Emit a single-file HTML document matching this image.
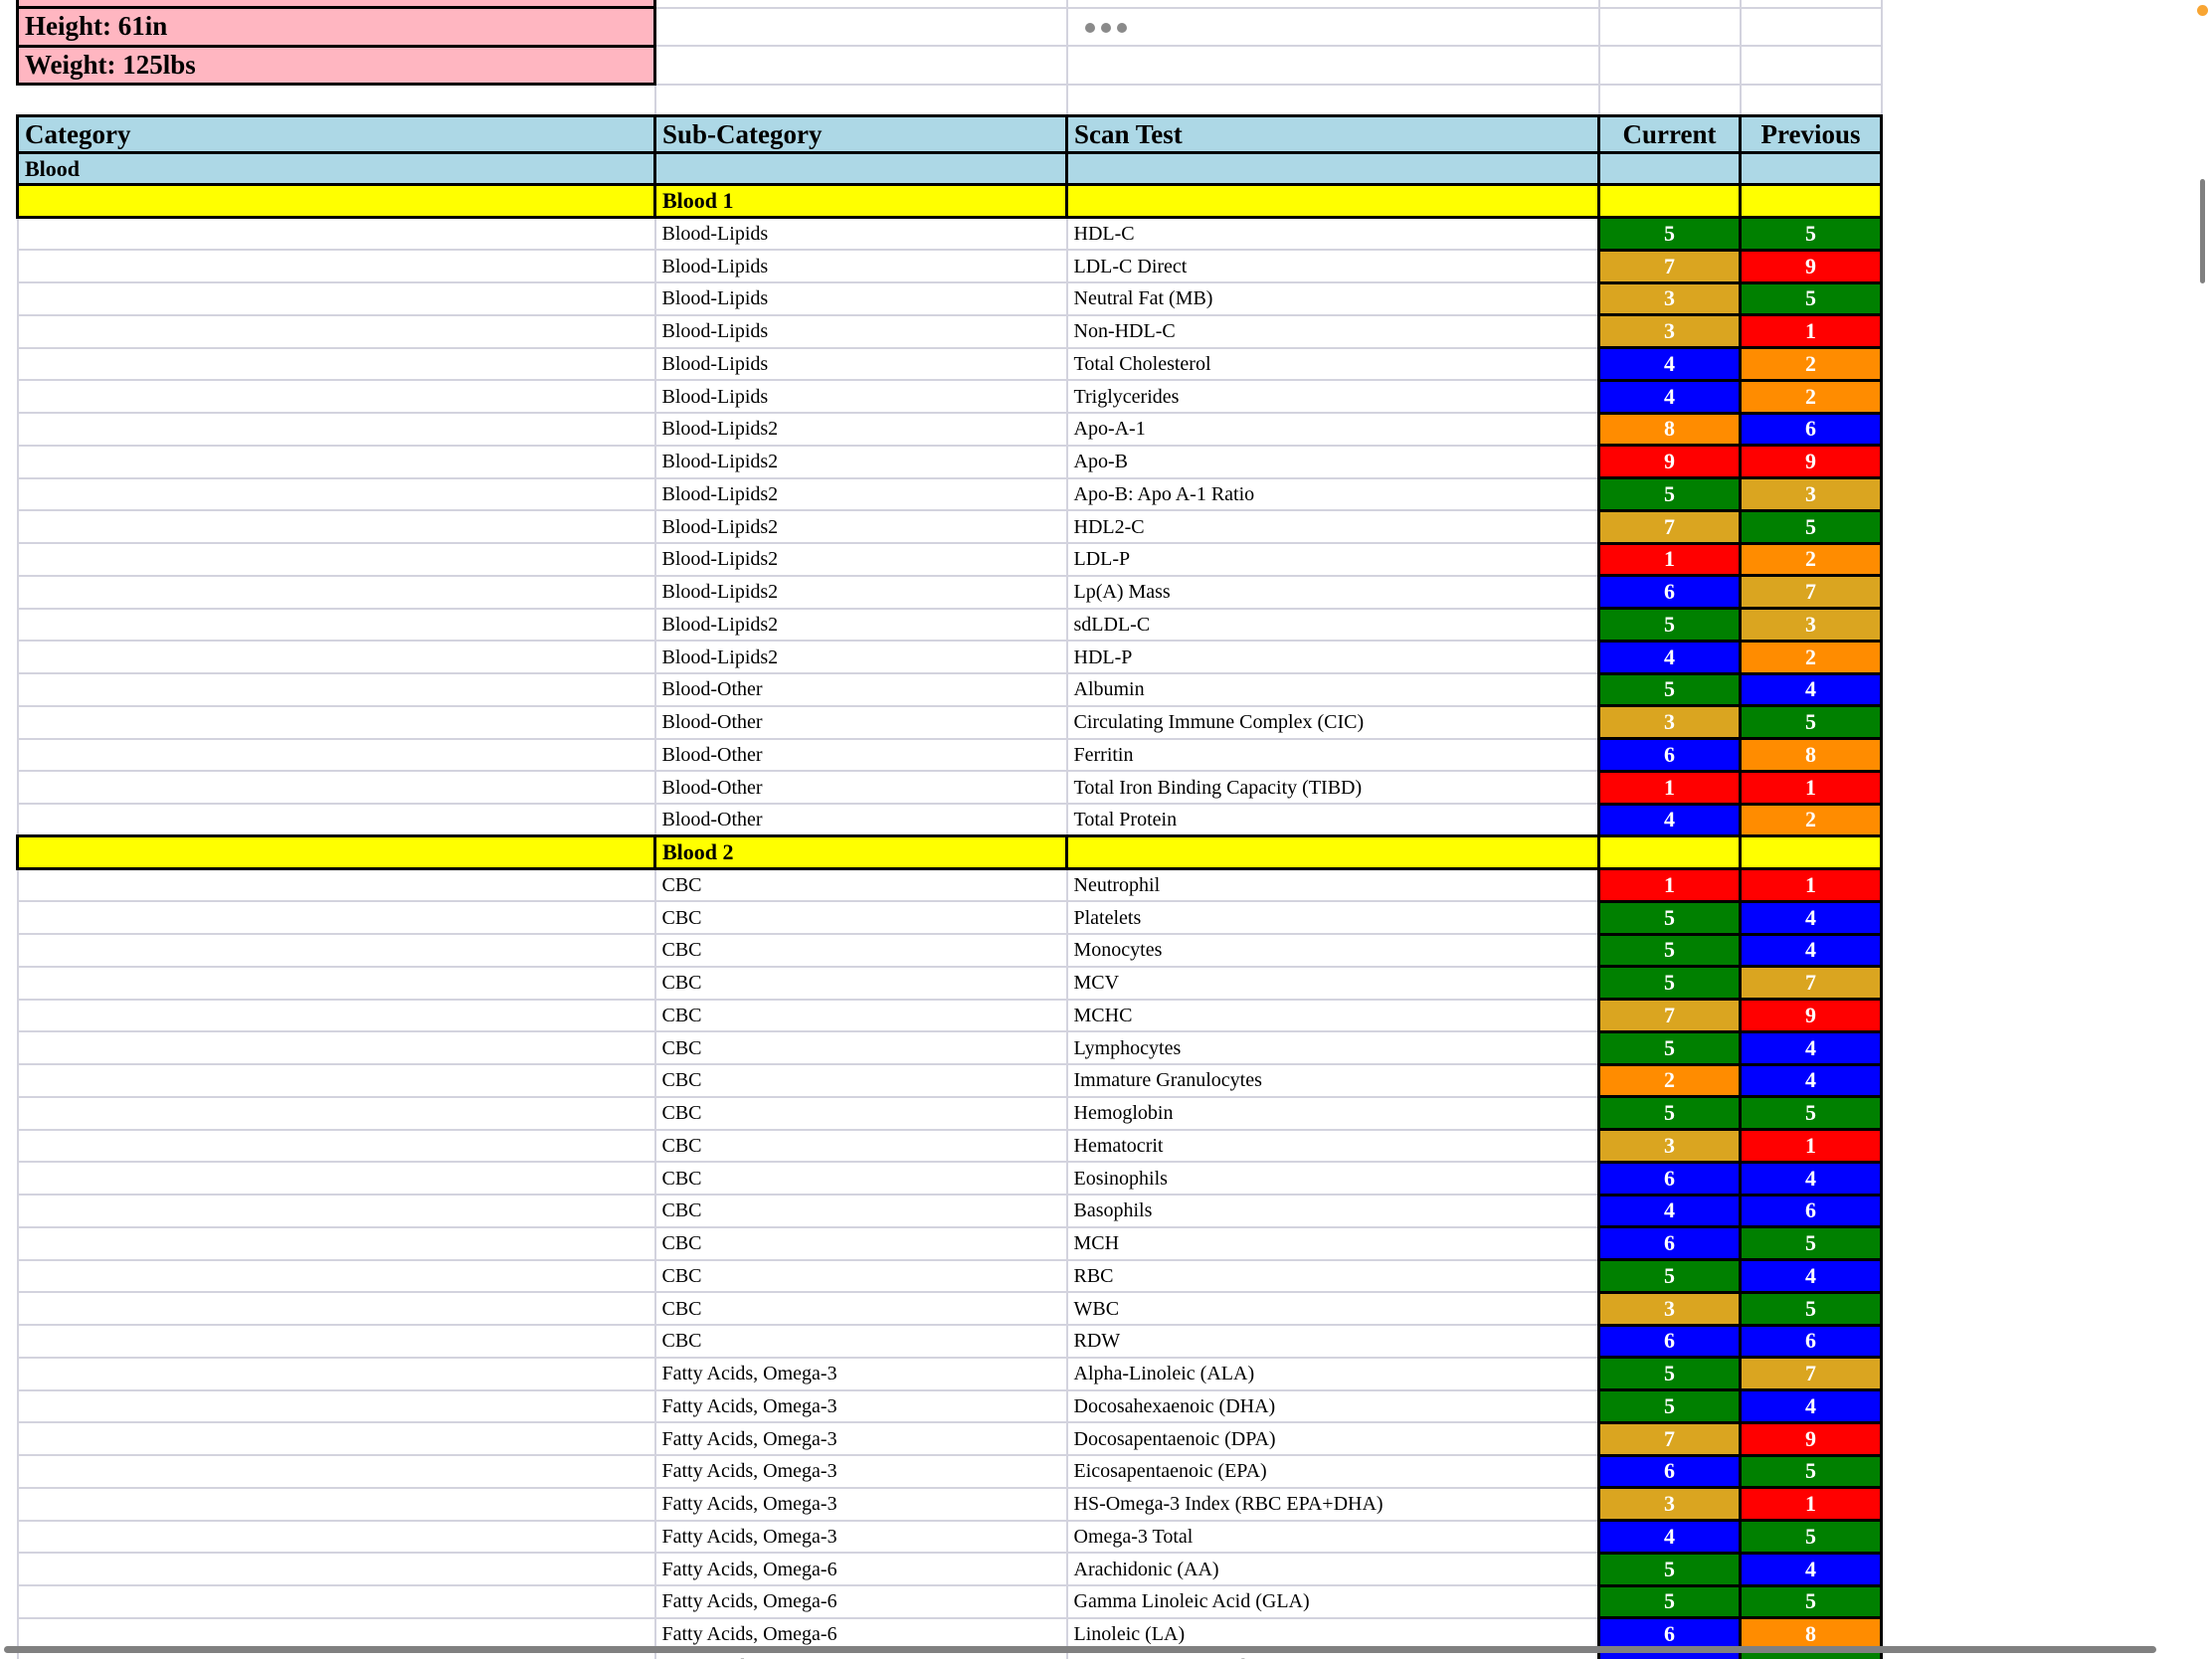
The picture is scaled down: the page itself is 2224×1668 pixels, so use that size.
<!DOCTYPE html>
<html><head><meta charset="utf-8">
<style>
html,body{margin:0;padding:0;width:2224px;height:1668px;overflow:hidden;background:#fff;}
body{position:relative;font-family:"Liberation Serif",serif;color:#000;}
table{position:absolute;left:16px;top:-28px;border-collapse:collapse;table-layout:fixed;width:1876px;}
td{border:2.5px solid #d3d3de;padding:0 0 0 6px;font-size:20px;white-space:nowrap;overflow:hidden;line-height:1;}
tr{height:32.75px;}
.pk{background:#ffb6c1;border:3px solid #000;font-weight:bold;font-size:27px;}
.lb{background:#add8e6;border:3px solid #000;}
.hd td.lb{font-weight:bold;font-size:27px;}
.ye{background:#ffff00;border:3px solid #000;font-weight:bold;font-size:22px;}
.c{text-align:center;padding:0;}
.n{color:#fff;font-weight:bold;font-size:22px;text-align:center;padding:0;border:3px solid #000;}
.r{background:#ff0000}.o{background:#ff8c00}.g{background:#daa520}.b{background:#0000ff}.gr{background:#008000}
.dots{position:absolute;top:20px;left:1091px;}
.dots i{display:inline-block;width:10px;height:10px;border-radius:50%;background:#8a8a8a;margin-right:6px;}
.hs{position:absolute;left:4px;top:1655px;width:2164px;height:7px;border-radius:4px;background:#808080;}
.vs{position:absolute;left:2212px;top:180px;width:5px;height:105px;border-radius:3px;background:#808080;}
.dot{position:absolute;left:2209px;top:5px;width:11px;height:11px;border-radius:50%;background:#f8a533;}
</style></head><body>
<table>
<colgroup><col style="width:641px"><col style="width:414px"><col style="width:535px"><col style="width:142px"><col style="width:142px"></colgroup>
<tr style="height:34px"><td class="pk"></td><td></td><td></td><td></td><td></td></tr>
<tr style="height:38.5px"><td class="pk">Height: 61in</td><td></td><td></td><td></td><td></td></tr>
<tr style="height:38.5px"><td class="pk">Weight: 125lbs</td><td></td><td></td><td></td><td></td></tr>
<tr style="height:32px"><td style="border-left-color:#fff"></td><td></td><td></td><td></td><td></td></tr>
<tr class="hd" style="height:37px"><td class="lb">Category</td><td class="lb">Sub-Category</td><td class="lb">Scan Test</td><td class="lb c">Current</td><td class="lb c">Previous</td></tr>
<tr style="height:32px"><td class="lb" style="font-weight:bold;font-size:22px">Blood</td><td class="lb"></td><td class="lb"></td><td class="lb"></td><td class="lb"></td></tr>
<tr style="height:33px"><td class="ye"></td><td class="ye">Blood 1</td><td class="ye"></td><td class="ye"></td><td class="ye"></td></tr>
<tr><td></td><td>Blood-Lipids</td><td>HDL-C</td><td class="n gr">5</td><td class="n gr">5</td></tr>
<tr><td></td><td>Blood-Lipids</td><td>LDL-C Direct</td><td class="n g">7</td><td class="n r">9</td></tr>
<tr><td></td><td>Blood-Lipids</td><td>Neutral Fat (MB)</td><td class="n g">3</td><td class="n gr">5</td></tr>
<tr><td></td><td>Blood-Lipids</td><td>Non-HDL-C</td><td class="n g">3</td><td class="n r">1</td></tr>
<tr><td></td><td>Blood-Lipids</td><td>Total Cholesterol</td><td class="n b">4</td><td class="n o">2</td></tr>
<tr><td></td><td>Blood-Lipids</td><td>Triglycerides</td><td class="n b">4</td><td class="n o">2</td></tr>
<tr><td></td><td>Blood-Lipids2</td><td>Apo-A-1</td><td class="n o">8</td><td class="n b">6</td></tr>
<tr><td></td><td>Blood-Lipids2</td><td>Apo-B</td><td class="n r">9</td><td class="n r">9</td></tr>
<tr><td></td><td>Blood-Lipids2</td><td>Apo-B: Apo A-1 Ratio</td><td class="n gr">5</td><td class="n g">3</td></tr>
<tr><td></td><td>Blood-Lipids2</td><td>HDL2-C</td><td class="n g">7</td><td class="n gr">5</td></tr>
<tr><td></td><td>Blood-Lipids2</td><td>LDL-P</td><td class="n r">1</td><td class="n o">2</td></tr>
<tr><td></td><td>Blood-Lipids2</td><td>Lp(A) Mass</td><td class="n b">6</td><td class="n g">7</td></tr>
<tr><td></td><td>Blood-Lipids2</td><td>sdLDL-C</td><td class="n gr">5</td><td class="n g">3</td></tr>
<tr><td></td><td>Blood-Lipids2</td><td>HDL-P</td><td class="n b">4</td><td class="n o">2</td></tr>
<tr><td></td><td>Blood-Other</td><td>Albumin</td><td class="n gr">5</td><td class="n b">4</td></tr>
<tr><td></td><td>Blood-Other</td><td>Circulating Immune Complex (CIC)</td><td class="n g">3</td><td class="n gr">5</td></tr>
<tr><td></td><td>Blood-Other</td><td>Ferritin</td><td class="n b">6</td><td class="n o">8</td></tr>
<tr><td></td><td>Blood-Other</td><td>Total Iron Binding Capacity (TIBD)</td><td class="n r">1</td><td class="n r">1</td></tr>
<tr><td></td><td>Blood-Other</td><td>Total Protein</td><td class="n b">4</td><td class="n o">2</td></tr>
<tr><td class="ye"></td><td class="ye">Blood 2</td><td class="ye"></td><td class="ye"></td><td class="ye"></td></tr>
<tr><td></td><td>CBC</td><td>Neutrophil</td><td class="n r">1</td><td class="n r">1</td></tr>
<tr><td></td><td>CBC</td><td>Platelets</td><td class="n gr">5</td><td class="n b">4</td></tr>
<tr><td></td><td>CBC</td><td>Monocytes</td><td class="n gr">5</td><td class="n b">4</td></tr>
<tr><td></td><td>CBC</td><td>MCV</td><td class="n gr">5</td><td class="n g">7</td></tr>
<tr><td></td><td>CBC</td><td>MCHC</td><td class="n g">7</td><td class="n r">9</td></tr>
<tr><td></td><td>CBC</td><td>Lymphocytes</td><td class="n gr">5</td><td class="n b">4</td></tr>
<tr><td></td><td>CBC</td><td>Immature Granulocytes</td><td class="n o">2</td><td class="n b">4</td></tr>
<tr><td></td><td>CBC</td><td>Hemoglobin</td><td class="n gr">5</td><td class="n gr">5</td></tr>
<tr><td></td><td>CBC</td><td>Hematocrit</td><td class="n g">3</td><td class="n r">1</td></tr>
<tr><td></td><td>CBC</td><td>Eosinophils</td><td class="n b">6</td><td class="n b">4</td></tr>
<tr><td></td><td>CBC</td><td>Basophils</td><td class="n b">4</td><td class="n b">6</td></tr>
<tr><td></td><td>CBC</td><td>MCH</td><td class="n b">6</td><td class="n gr">5</td></tr>
<tr><td></td><td>CBC</td><td>RBC</td><td class="n gr">5</td><td class="n b">4</td></tr>
<tr><td></td><td>CBC</td><td>WBC</td><td class="n g">3</td><td class="n gr">5</td></tr>
<tr><td></td><td>CBC</td><td>RDW</td><td class="n b">6</td><td class="n b">6</td></tr>
<tr><td></td><td>Fatty Acids, Omega-3</td><td>Alpha-Linoleic (ALA)</td><td class="n gr">5</td><td class="n g">7</td></tr>
<tr><td></td><td>Fatty Acids, Omega-3</td><td>Docosahexaenoic (DHA)</td><td class="n gr">5</td><td class="n b">4</td></tr>
<tr><td></td><td>Fatty Acids, Omega-3</td><td>Docosapentaenoic (DPA)</td><td class="n g">7</td><td class="n r">9</td></tr>
<tr><td></td><td>Fatty Acids, Omega-3</td><td>Eicosapentaenoic (EPA)</td><td class="n b">6</td><td class="n gr">5</td></tr>
<tr><td></td><td>Fatty Acids, Omega-3</td><td>HS-Omega-3 Index (RBC EPA+DHA)</td><td class="n g">3</td><td class="n r">1</td></tr>
<tr><td></td><td>Fatty Acids, Omega-3</td><td>Omega-3 Total</td><td class="n b">4</td><td class="n gr">5</td></tr>
<tr><td></td><td>Fatty Acids, Omega-6</td><td>Arachidonic (AA)</td><td class="n gr">5</td><td class="n b">4</td></tr>
<tr><td></td><td>Fatty Acids, Omega-6</td><td>Gamma Linoleic Acid (GLA)</td><td class="n gr">5</td><td class="n gr">5</td></tr>
<tr><td></td><td>Fatty Acids, Omega-6</td><td>Linoleic (LA)</td><td class="n b">6</td><td class="n o">8</td></tr>
<tr><td></td><td>Fatty Acids, Other</td><td>Cis-Monounsaturated Total</td><td class="n b">6</td><td class="n gr">5</td></tr>
<tr><td></td><td>Fatty Acids, Other</td><td>Oleic</td><td class="n gr">5</td><td class="n gr">5</td></tr>
</table>
<div class="dots"><i></i><i></i><i></i></div>
<div class="hs"></div>
<div class="vs"></div>
<div class="dot"></div>
</body></html>
